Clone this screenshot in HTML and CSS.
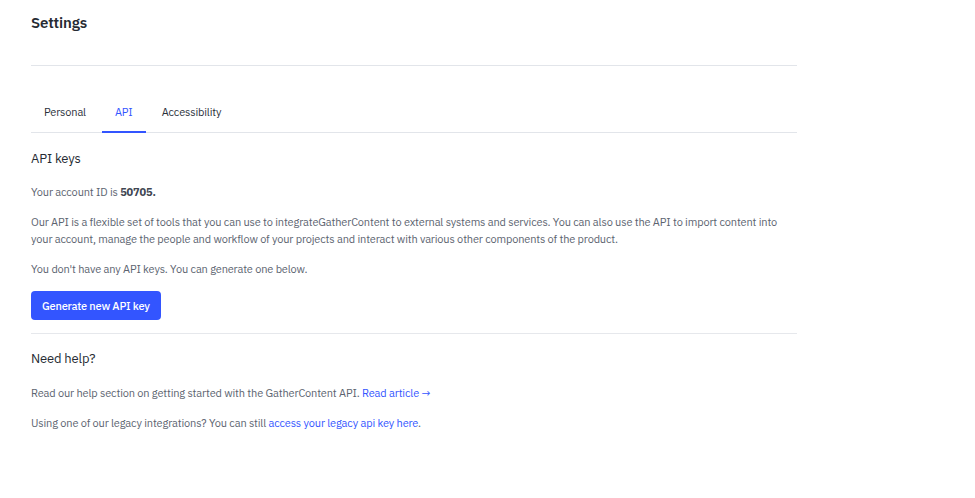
FILE: index.html
```html
<!DOCTYPE html>
<html lang="en">
<head>
<meta charset="utf-8">
<title>Settings</title>
<link rel="stylesheet" href="styles.css">
</head>
<body>
<main class="page">
  <header class="page-header">
    <h1 class="page-title">Settings</h1>
  </header>
  <nav class="tabs">
    <a class="tab">Personal</a>
    <a class="tab tab-active">API</a>
    <a class="tab">Accessibility</a>
  </nav>
  <section class="section">
    <h2 class="section-title">API keys</h2>
    <p class="text">Your account ID is <strong>50705.</strong></p>
    <p class="text">Our API is a flexible set of tools that you can use to integrateGatherContent to external systems and services. You can also use the API to import content into your account, manage the people and workflow of your projects and interact with various other components of the product.</p>
    <p class="text">You don't have any API keys. You can generate one below.</p>
    <button class="btn-primary" type="button">Generate new API key</button>
  </section>
  <section class="section section-help">
    <h2 class="section-title">Need help?</h2>
    <p class="text">Read our help section on getting started with the GatherContent API. <a class="link" href="#">Read article →</a></p>
    <p class="text">Using one of our legacy integrations? You can still <a class="link" href="#">access your legacy api key here</a>.</p>
  </section>
</main>
</body>
</html>
```
FILE: styles.css
```css
html, body {
  margin: 0;
  padding: 0;
  background: #ffffff;
}
body {
  font-family: "IBM Plex Sans", Roboto, "Liberation Sans", sans-serif;
  color: #3f4652;
  letter-spacing: -0.15px;
}
.page {
  width: 766px;
  padding: 0 0 0 31px;
}
.page-header {
  border-bottom: 1px solid #e2e5ea;
  height: 65px;
}
.page-title {
  margin: 0;
  padding-top: 13px;
  font-size: 15px;
  line-height: 20px;
  font-weight: 600;
  color: #262b33;
}
.tabs {
  display: flex;
  gap: 3px;
  margin-top: 35px;
  border-bottom: 1px solid #e2e5ea;
  height: 31px;
}
.tab {
  display: block;
  padding: 0 13px;
  font-size: 11px;
  line-height: 22px;
  color: #2a303a;
  height: 30px;
  box-sizing: border-box;
}
.tab-active {
  color: #3355ff;
  border-bottom: 2px solid #3355ff;
  height: 32px;
}
.section {
  padding-top: 17px;
  padding-bottom: 13px;
  border-bottom: 1px solid #e6e8ec;
}
.section-help {
  border-bottom: none;
  padding-top: 16px;
}
.section-title {
  margin: 0 0 16px;
  font-size: 13px;
  line-height: 18px;
  font-weight: 400;
  color: #262b33;
}
.section-help .section-title {
  margin-bottom: 17px;
}
.text {
  margin: 0 0 13px;
  font-size: 11px;
  line-height: 17px;
  color: #5c6470;
}
.text strong {
  font-weight: 700;
  color: #3f4652;
}
.link {
  color: #3355ff;
  text-decoration: none;
}
.btn-primary {
  display: block;
  margin-top: 3px;
  height: 29px;
  padding: 0 11px;
  border: none;
  border-radius: 4px;
  background: #3355ff;
  color: #ffffff;
  font-family: inherit;
  font-size: 11px;
  font-weight: 500;
  letter-spacing: -0.2px;
}
```
